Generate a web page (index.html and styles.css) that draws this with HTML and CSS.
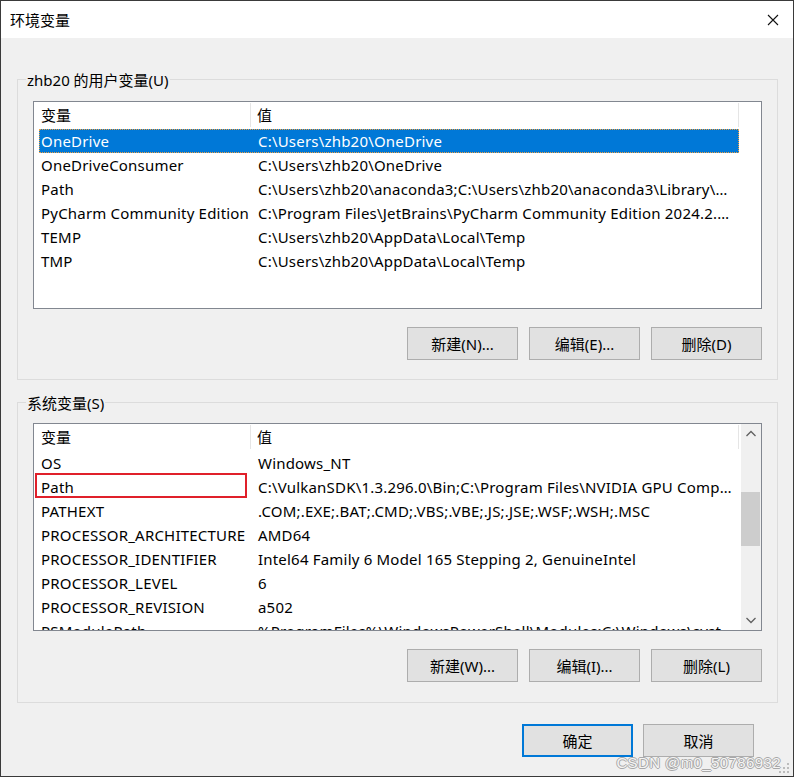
FILE: index.html
```html
<!DOCTYPE html>
<html lang="zh-CN">
<head>
<meta charset="utf-8">
<title>环境变量</title>
<link rel="stylesheet" href="styles.css">
</head>
<body>
<div class="window">
  <div class="titlebar">
    <span class="title">环境变量</span>
    <svg class="close" width="12" height="12" viewBox="0 0 12 12"><path d="M1 1 L11 11 M11 1 L1 11" stroke="#111" stroke-width="1.1" fill="none"/></svg>
  </div>
  <div class="content">
    <div class="group">
      <div class="group-label">zhb20 的用户变量(U)</div>
      <div class="list">
        <div class="header">
          <div class="hcell hname">变量</div>
          <div class="hcell hval">值</div>
        </div>
        <div class="row selected"><div class="c1">OneDrive</div><div class="c2">C:\Users\zhb20\OneDrive</div></div>
        <div class="row"><div class="c1">OneDriveConsumer</div><div class="c2">C:\Users\zhb20\OneDrive</div></div>
        <div class="row"><div class="c1">Path</div><div class="c2">C:\Users\zhb20\anaconda3;C:\Users\zhb20\anaconda3\Library\mingw-w64\bin;C:\Users\zhb20\anaconda3\Library\usr\bin</div></div>
        <div class="row"><div class="c1">PyCharm Community Edition</div><div class="c2">C:\Program Files\JetBrains\PyCharm Community Edition 2024.2.1\bin;</div></div>
        <div class="row"><div class="c1">TEMP</div><div class="c2">C:\Users\zhb20\AppData\Local\Temp</div></div>
        <div class="row"><div class="c1">TMP</div><div class="c2">C:\Users\zhb20\AppData\Local\Temp</div></div>
      </div>
      <div class="buttons">
        <div class="btn">新建(N)...</div>
        <div class="btn">编辑(E)...</div>
        <div class="btn">删除(D)</div>
      </div>
    </div>

    <div class="group group2">
      <div class="group-label">系统变量(S)</div>
      <div class="list list-scroll">
        <div class="list-main">
          <div class="header">
            <div class="hcell hname">变量</div>
            <div class="hcell hval">值</div>
          </div>
          <div class="row"><div class="c1">OS</div><div class="c2">Windows_NT</div></div>
          <div class="row marked"><div class="c1">Path</div><div class="c2">C:\VulkanSDK\1.3.296.0\Bin;C:\Program Files\NVIDIA GPU Computing Toolkit\CUDA\v12.6\bin</div><div class="redbox"></div></div>
          <div class="row"><div class="c1">PATHEXT</div><div class="c2">.COM;.EXE;.BAT;.CMD;.VBS;.VBE;.JS;.JSE;.WSF;.WSH;.MSC</div></div>
          <div class="row"><div class="c1">PROCESSOR_ARCHITECTURE</div><div class="c2">AMD64</div></div>
          <div class="row"><div class="c1">PROCESSOR_IDENTIFIER</div><div class="c2">Intel64 Family 6 Model 165 Stepping 2, GenuineIntel</div></div>
          <div class="row"><div class="c1">PROCESSOR_LEVEL</div><div class="c2">6</div></div>
          <div class="row"><div class="c1">PROCESSOR_REVISION</div><div class="c2">a502</div></div>
          <div class="row"><div class="c1">PSModulePath</div><div class="c2">%ProgramFiles%\WindowsPowerShell\Modules;C:\Windows\system32</div></div>
        </div>
        <div class="scrollbar">
          <svg class="arrow" width="20" height="20" viewBox="0 0 20 20"><path d="M5.5 12 L10 7.5 L14.5 12" stroke="#606060" stroke-width="1.3" fill="none"/></svg>
          <div class="track"><div class="thumb"></div></div>
          <svg class="arrow" width="20" height="20" viewBox="0 0 20 20"><path d="M5.5 8 L10 12.5 L14.5 8" stroke="#606060" stroke-width="1.3" fill="none"/></svg>
        </div>
      </div>
      <div class="buttons">
        <div class="btn">新建(W)...</div>
        <div class="btn">编辑(I)...</div>
        <div class="btn">删除(L)</div>
      </div>
    </div>

    <div class="footer">
      <div class="btn default">确定</div>
      <div class="btn">取消</div>
    </div>
  </div>
  <div class="watermark">CSDN @m0_50786932</div>
  <svg class="grip" width="12" height="12" viewBox="0 0 12 12">
    <rect x="8" y="0" width="2" height="2" fill="#bcbcbc"/>
    <rect x="4" y="4" width="2" height="2" fill="#bcbcbc"/>
    <rect x="8" y="4" width="2" height="2" fill="#bcbcbc"/>
    <rect x="0" y="8" width="2" height="2" fill="#bcbcbc"/>
    <rect x="4" y="8" width="2" height="2" fill="#bcbcbc"/>
    <rect x="8" y="8" width="2" height="2" fill="#bcbcbc"/>
  </svg>
</div>
</body>
</html>
```

FILE: styles.css
```css
* { box-sizing: border-box; }
html, body { margin: 0; padding: 0; }
body {
  font-family: "Noto Sans", "Noto Sans CJK SC", sans-serif;
  font-size: 15px;
  color: #000;
  background: #f0f0f0;
}
.window {
  position: relative;
  width: 794px;
  height: 777px;
  border: 1px solid #3a3a3a;
  background: #f0f0f0;
  display: flex;
  flex-direction: column;
  overflow: hidden;
}
.titlebar {
  height: 37px;
  background: #fff;
  display: flex;
  align-items: center;
  justify-content: space-between;
  padding: 0 14px 0 9px;
  flex: none;
}
.title { font-family: "Noto Sans CJK SC", sans-serif; font-size: 15px; line-height: 20px; }
.content {
  flex: 1;
  display: flex;
  flex-direction: column;
  padding: 41px 15px 0 16px;
}
.group {
  border: 1px solid #dcdcdc;
  padding: 0 15px 19px 15px;
  display: flex;
  flex-direction: column;
}
.group2 { margin-top: 22px; padding-bottom: 20px; }
.group-label {
  margin: -10px 0 0 -7px;
  padding: 0 1px;
  line-height: 20px;
  height: 20px;
  background: #f0f0f0;
  align-self: flex-start;
}
.list {
  margin-top: 11px;
  height: 208px;
  border: 1px solid #828790;
  background: #fff;
  overflow: hidden;
  flex: none;
}
.group2 .list { margin-top: 10px; }
.list-scroll { display: flex; }
.list-main { flex: 1; overflow: hidden; }
.header {
  display: flex;
  height: 27px;
  font-family: "Noto Sans CJK SC", sans-serif;
}
.hcell { border-right: 1px solid #e5e5e5; margin: 1px 0 2px; line-height: 24px; }
.hname { width: 217px; padding-left: 7px; }
.hval { width: 488px; padding-left: 6px; }
.row {
  position: relative;
  display: flex;
  height: 24px;
  line-height: 24px;
  width: 700px;
  margin-left: 5px;
  white-space: nowrap;
  letter-spacing: 0.2px;
}
.c1 { width: 212px; padding-left: 2px; overflow: hidden; }
.c2 { width: 488px; padding: 0 6px 0 7px; overflow: hidden; text-overflow: ellipsis; }
.selected {
  background: #0078d7;
  color: #fff;
  outline: 1px dotted #f0a040;
  outline-offset: -1px;
}
.redbox {
  position: absolute;
  left: -4px;
  top: -2px;
  width: 212px;
  height: 25px;
  border: 2px solid #e0202a;
}
.scrollbar {
  width: 20px;
  flex: none;
  background: #f0f0f0;
  display: flex;
  flex-direction: column;
}
.arrow { display: block; flex: none; }
.track { flex: 1; padding-top: 48px; }
.thumb { width: 19px; height: 54px; background: #cdcdcd; }
.buttons {
  display: flex;
  justify-content: flex-end;
  gap: 11px;
  margin-top: 18px;
}
.btn {
  width: 111px;
  height: 33px;
  border: 1px solid #adadad;
  background: #e1e1e1;
  display: flex;
  align-items: center;
  justify-content: center;
  font-family: "Noto Sans", "Noto Sans CJK SC", sans-serif;
  font-size: 15px;
  flex: none;
}
.footer {
  display: flex;
  justify-content: flex-end;
  gap: 10px;
  margin-top: 21px;
  padding-right: 24px;
}
.btn.default { border: 2px solid #0078d7; }
.watermark {
  position: absolute;
  right: 12px;
  bottom: 4px;
  font-family: "Liberation Sans", sans-serif;
  font-size: 15px;
  line-height: 18px;
  letter-spacing: 0.4px;
  color: #f4f4f4;
  text-shadow: -1px 0 0 #a8a8a8, 1px 0 0 #a8a8a8, 0 -1px 0 #a8a8a8, 0 1px 0 #a8a8a8;
}
.grip { position: absolute; right: 2px; bottom: 1px; }
```
